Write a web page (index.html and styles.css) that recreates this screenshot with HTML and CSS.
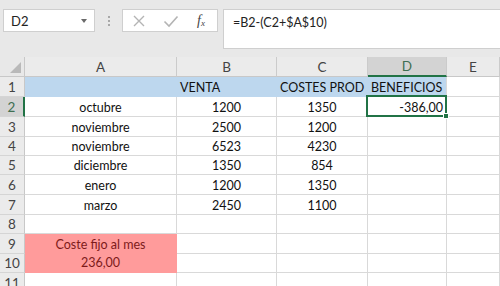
FILE: index.html
```html
<!DOCTYPE html>
<html>
<head>
<meta charset="utf-8">
<link rel="stylesheet" href="styles.css">
</head>
<body>
<div class="app">
  <div class="toolbar">
    <div class="namebox">
      <span class="name">D2</span>
      <span class="caret"></span>
    </div>
    <div class="grip"><i></i><i></i><i></i></div>
    <div class="btns">
      <svg class="ico" width="14" height="14" viewBox="0 0 14 14"><path d="M2 2 L12 12 M12 2 L2 12" stroke="#b4b4b4" stroke-width="1.4" fill="none"/></svg>
      <svg class="ico" width="16" height="14" viewBox="0 0 16 14"><path d="M1.5 7.5 L6 12 L14.5 2.5" stroke="#b4b4b4" stroke-width="1.6" fill="none"/></svg>
      <span class="fx">f<sub>x</sub></span>
    </div>
    <div class="formula">=B2-(C2+$A$10)</div>
  </div>
  <div class="sheet">
    <div class="corner"><span class="tri"></span></div>
    <div class="ch">A</div>
    <div class="ch">B</div>
    <div class="ch">C</div>
    <div class="ch sel">D</div>
    <div class="ch">E</div>

    <div class="rh">1</div>
    <div class="c blue"></div>
    <div class="c blue left">VENTA</div>
    <div class="c blue left">COSTES PROD</div>
    <div class="c blue left end">BENEFICIOS</div>
    <div class="c"></div>

    <div class="rh rsel">2</div>
    <div class="c">octubre</div>
    <div class="c">1200</div>
    <div class="c">1350</div>
    <div class="c right active">-386,00<span class="handle"></span></div>
    <div class="c"></div>

    <div class="rh">3</div>
    <div class="c">noviembre</div>
    <div class="c">2500</div>
    <div class="c">1200</div>
    <div class="c"></div>
    <div class="c"></div>

    <div class="rh">4</div>
    <div class="c">noviembre</div>
    <div class="c">6523</div>
    <div class="c">4230</div>
    <div class="c"></div>
    <div class="c"></div>

    <div class="rh">5</div>
    <div class="c">diciembre</div>
    <div class="c">1350</div>
    <div class="c">854</div>
    <div class="c"></div>
    <div class="c"></div>

    <div class="rh">6</div>
    <div class="c">enero</div>
    <div class="c">1200</div>
    <div class="c">1350</div>
    <div class="c"></div>
    <div class="c"></div>

    <div class="rh">7</div>
    <div class="c">marzo</div>
    <div class="c">2450</div>
    <div class="c">1100</div>
    <div class="c"></div>
    <div class="c"></div>

    <div class="rh">8</div>
    <div class="c"></div>
    <div class="c"></div>
    <div class="c"></div>
    <div class="c"></div>
    <div class="c"></div>

    <div class="rh">9</div>
    <div class="c pink"><span>Coste fijo al mes</span><span>236,00</span></div>
    <div class="c"></div>
    <div class="c"></div>
    <div class="c"></div>
    <div class="c"></div>

    <div class="rh">10</div>
    <div class="c"></div>
    <div class="c"></div>
    <div class="c"></div>
    <div class="c"></div>

    <div class="rh">11</div>
    <div class="c"></div>
    <div class="c"></div>
    <div class="c"></div>
    <div class="c"></div>
    <div class="c"></div>
  </div>
</div>
</body>
</html>
```

FILE: styles.css
```css
* { box-sizing: border-box; }
html, body { margin: 0; padding: 0; }
body {
  width: 500px;
  height: 286px;
  overflow: hidden;
  background: #e8e8e8;
  font-family: Lato, "Liberation Sans", sans-serif;
}
.app { width: 500px; height: 286px; overflow: hidden; }

.toolbar {
  height: 57px;
  display: flex;
  align-items: flex-start;
  padding: 9px 0 0 3px;
  background: #e8e8e8;
}
.namebox {
  width: 92px;
  height: 23px;
  background: #fff;
  border: 1px solid #cfcfcf;
  display: flex;
  align-items: center;
  justify-content: space-between;
  padding: 0 7px 0 7px;
}
.name { font-size: 13px; color: #222; }
.caret {
  width: 0; height: 0;
  border-left: 3.5px solid transparent;
  border-right: 3.5px solid transparent;
  border-top: 4px solid #6a6a6a;
}
.grip {
  width: 27px;
  height: 23px;
  display: flex;
  flex-direction: column;
  align-items: center;
  justify-content: center;
  gap: 2px;
}
.grip i { display: block; width: 2px; height: 2px; background: #a8a8a8; }
.btns {
  width: 96px;
  height: 23px;
  background: #fff;
  border: 1px solid #cfcfcf;
  display: flex;
  align-items: center;
  padding: 0 0 0 9px;
}
.btns .ico:first-child { margin-right: 17px; }
.btns .ico + .ico { margin-right: 18px; }
.fx {
  font-family: "Liberation Serif", serif;
  font-style: italic;
  font-size: 14px;
  color: #444;
  line-height: 1;
}
.fx sub { font-size: 9px; vertical-align: -1px; }
.formula {
  flex: 1;
  height: 40px;
  margin-left: 5px;
  background: #fff;
  border: 1px solid #cfcfcf;
  border-right: none;
  padding: 5px 0 0 9px;
  font-size: 12.5px;
  color: #222;
}

.sheet {
  display: grid;
  grid-template-columns: 25px 152px 100px 91px 79px 53px;
  grid-template-rows: 20px 20px 20px 20px 19px 19px 20px 20px 19px 20px 19px 20px;
  background: #fff;
  font-size: 12.5px;
  color: #111;
}
.corner {
  background: #e8e8e8;
  border-right: 1px solid #c8c8c8;
  border-bottom: 1px solid #c8c8c8;
  position: relative;
}
.tri {
  position: absolute;
  right: 3px;
  bottom: 3px;
  width: 0; height: 0;
  border-left: 11px solid transparent;
  border-bottom: 11px solid #b9b9b9;
}
.ch {
  background: #ebebeb;
  border-right: 1px solid #cbcbcb;
  border-bottom: 1px solid #c8c8c8;
  display: flex;
  align-items: center;
  justify-content: center;
  color: #444;
  font-size: 13.5px;
}
.ch.sel {
  background: #d3d3d3;
  border-bottom: 2px solid #217346;
  color: #3f6f52;
}
.rh {
  background: #ebebeb;
  border-right: 1px solid #c8c8c8;
  border-bottom: 1px solid #d5d5d5;
  display: flex;
  align-items: center;
  justify-content: center;
  color: #444;
  font-size: 13.5px;
}
.rh.rsel {
  background: #d3d3d3;
  border-right: 2px solid #217346;
  color: #3f6f52;
}
.c {
  border-right: 1px solid #d9d9d9;
  border-bottom: 1px solid #d9d9d9;
  display: flex;
  align-items: center;
  justify-content: center;
  white-space: nowrap;
  padding-top: 1px;
}
.c.left { justify-content: flex-start; padding-left: 3px; }
.c.right { justify-content: flex-end; padding-right: 3px; }
.c.blue {
  background: #bdd7ee;
  border-right-color: #bdd7ee;
  border-bottom-color: #bdd7ee;
}
.c.blue.end { border-right-color: #d9d9d9; }
.c.pink {
  grid-row: span 2;
  background: #ff9b9b;
  border-right-color: #ff9b9b;
  border-bottom-color: #ff9b9b;
  flex-direction: column;
  justify-content: space-around;
  color: #7d1a1a;
  padding: 2px 0 1px 0;
}
.c.active { position: relative; }
.c.active::before {
  content: "";
  position: absolute;
  left: -2px;
  top: -2px;
  right: -1px;
  bottom: -1px;
  border: 2px solid #217346;
}
.handle {
  position: absolute;
  right: -3px;
  bottom: -3px;
  width: 6px;
  height: 6px;
  background: #217346;
  border: 1px solid #fff;
  z-index: 2;
}
```
